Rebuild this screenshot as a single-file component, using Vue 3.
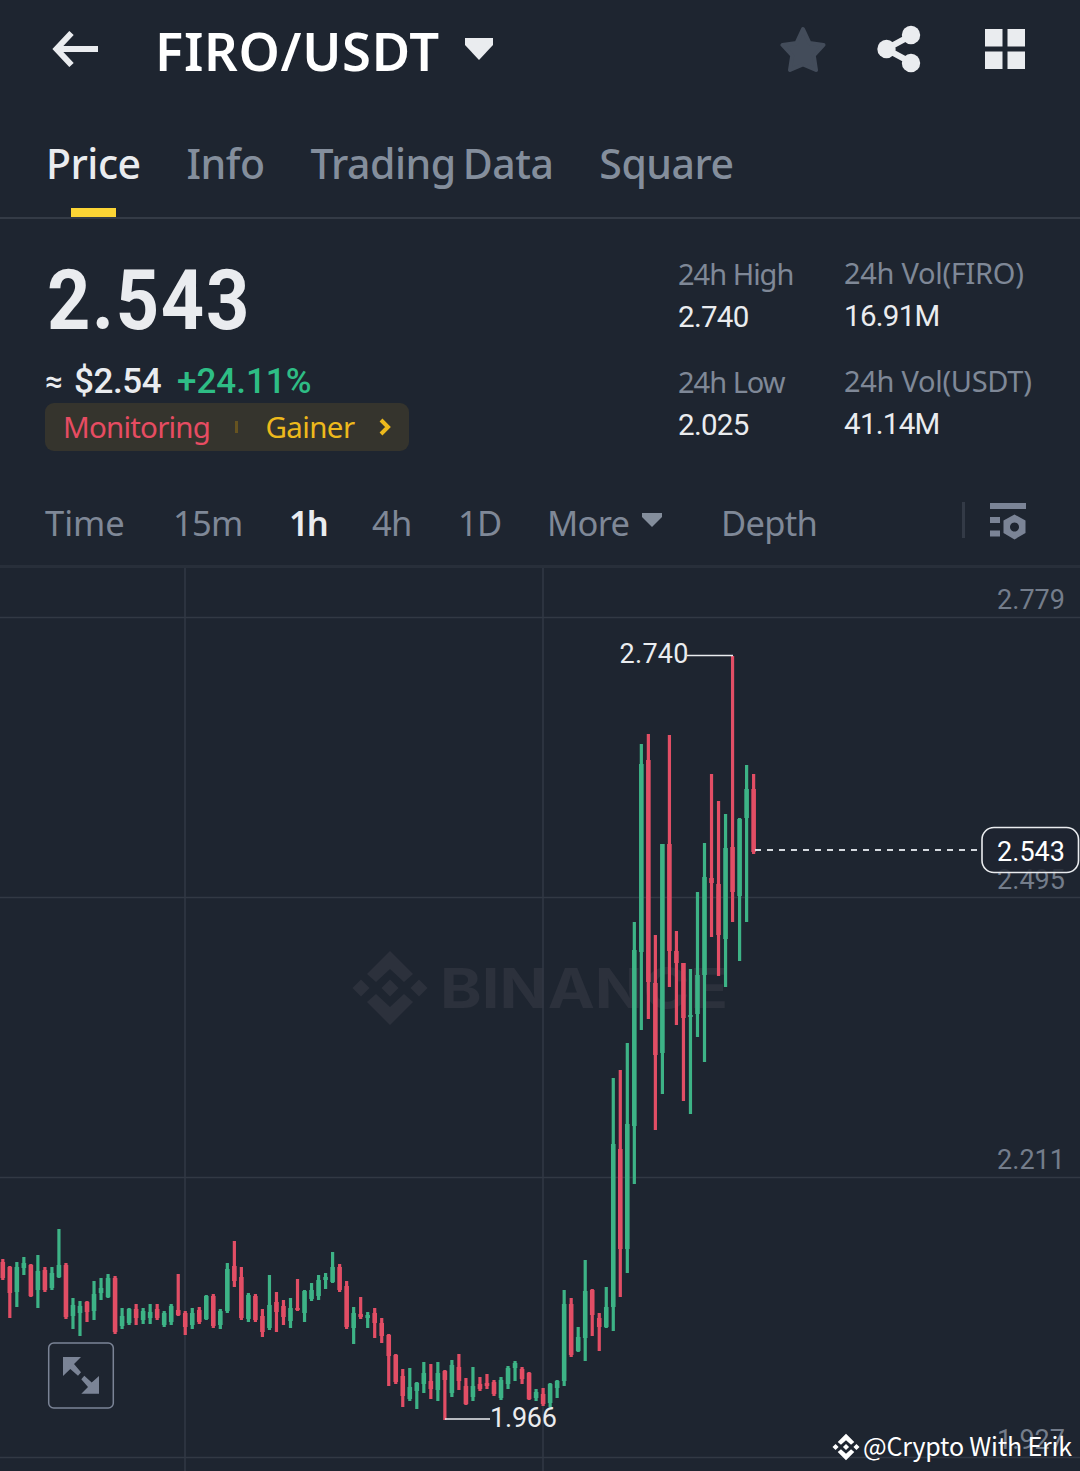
<!--
  行情页 — 交易对头部 + 24h 数据 + K 线图
-->
<template>
  <div class="page">
    <header class="header">
      <svg class="back" width="46" height="36" viewBox="0 0 46 36">
        <path d="M19.5 2 4.500 18l15 16M4 18h42" />
      </svg>
      <h1 class="pair">FIRO/USDT</h1>
      <svg class="caret" width="28" height="23" viewBox="0 0 28 23">
        <path d="M0 0h28v7L14 22 0 7z" />
      </svg>
      <div class="actions">
        <svg class="star" width="46" height="48" viewBox="0 0 46 48">
          <path d="M23 4 29.5 18 43.5 20 33.8 30.500 36 45 23 39.500 10 45 12.2 30.500 2.5 20 16.500 18z" />
        </svg>
        <svg class="share" width="44" height="48" viewBox="0 0 44 48">
          <path d="M35 10 9 24l26 14" />
          <circle cx="34" cy="10" r="9.200" />
          <circle cx="9.500" cy="24" r="9.200" />
          <circle cx="34" cy="38" r="9.200" />
        </svg>
        <svg class="grid-icon" width="40" height="40" viewBox="0 0 40 40">
          <path d="M0 0h17.500v17.500H0zM22.500 0H40v17.500H22.500zM0 22.500h17.500V40H0zM22.500 22.500H40V40H22.500z" />
        </svg>
      </div>
    </header>

    <nav class="tabs">
      <a v-for="(tab, i) in tabs" :key="tab" class="tab" :class="{ active: i === 0 }">{{ tab }}</a>
    </nav>

    <section class="ticker">
      <div class="quote">
        <div class="last">2.543</div>
        <div class="fiat">
          <span class="approx">≈</span>
          <span class="usd">$2.54</span>
          <span class="change">+24.11%</span>
        </div>
        <div class="tags">
          <span class="monitoring">Monitoring</span>
          <i class="tag-sep" />
          <span class="gainer">Gainer</span>
          <svg width="12" height="18" viewBox="0 0 12 18">
            <path d="M2 2l7 7-7 7" />
          </svg>
        </div>
      </div>
      <div class="stats">
        <div v-for="(col, i) in stats" :key="i" class="stat-col">
          <div v-for="item in col" :key="item.label" class="stat">
            <div class="stat-label">{{ item.label }}</div>
            <div class="stat-value">{{ item.value }}</div>
          </div>
        </div>
      </div>
    </section>

    <div class="intervals">
      <span v-for="item in intervals" :key="item" :class="['interval', 'iv-' + item.toLowerCase(), { active: item === '1h' }]">{{ item }}</span>
      <svg class="more-caret" width="20" height="14" viewBox="0 0 20 14">
        <path d="M0 0h20v4L10 14 0 4z" />
      </svg>
      <span class="interval depth">Depth</span>
      <i class="bar-sep" />
      <svg class="settings" width="36" height="38" viewBox="0 0 36 38">
        <path d="M0 1h36v6H0zM0 15h10v6H0zM0 28.500h10v6H0z" />
        <path fill-rule="evenodd" d="M24.500 12.500 35.500 18.500v12.500l-11 6.500-11-6.500V18.500zM24.500 20.500a4.500 4.500 0 1 0 .01 0z" />
      </svg>
    </div>

    <!-- K 线图，viewBox 与页面坐标一致 -->
    <svg class="chart" width="1080" height="903" viewBox="0 568 1080 903">
      <g class="watermark">
        <g transform="translate(390 988)">
          <path :d="logoPath" />
        </g>
        <text x="440" y="1008" textLength="288" lengthAdjust="spacingAndGlyphs">BINANCE</text>
      </g>

      <g class="grid">
        <line v-for="y in gridY" :key="'h' + y" x1="0" x2="1080" :y1="y" :y2="y" />
        <line v-for="x in gridX" :key="'v' + x" :x1="x" :x2="x" y1="568" y2="1471" />
      </g>

      <g class="axis">
        <text v-for="t in axis" :key="t.label" x="997" :y="t.y" textLength="68">{{ t.label }}</text>
      </g>

      <g v-for="(c, i) in candles" :key="i" :class="c.up ? 'up' : 'down'">
        <rect :x="c.x - 1.6" :y="c.high" width="3.200" :height="c.low - c.high" />
        <rect :x="c.x - 2.3" :y="c.top" width="4.600" :height="c.bottom - c.top" />
      </g>

      <g class="marker">
        <path d="M687 655.500h46M445 1419h45" />
        <text x="619.500" y="663" textLength="69">2.740</text>
        <text x="490" y="1427" textLength="67">1.966</text>
      </g>

      <path class="last-line" d="M755 850h226" />
      <rect class="last-box" x="982" y="827.500" width="96.500" height="45" rx="12" />
      <text class="last-text" x="997" y="861" textLength="68">2.543</text>

      <g class="expand">
        <rect x="48.700" y="1343" width="64.600" height="65" rx="5" />
        <path d="M63 1357h18l-7 7 7 8.300-3 3.400-7.700-6.700-7.300 7zM99 1376v17.700H81.300l6.700-6.700-6.700-7.700 3-3.600 7.400 6.700z" />
      </g>

      <g class="credit">
        <g transform="translate(846 1447) scale(.36)">
          <path :d="logoPath" />
        </g>
        <text x="863" y="1456" textLength="209">@Crypto With Erik</text>
      </g>
    </svg>
  </div>
</template>

<script setup>
const tabs = ['Price', 'Info', 'Trading Data', 'Square']
const intervals = ['Time', '15m', '1h', '4h', '1D', 'More']

const stats = [
  [
    { label: '24h High', value: '2.740' },
    { label: '24h Low', value: '2.025' },
  ],
  [
    { label: '24h Vol(FIRO)', value: '16.91M' },
    { label: '24h Vol(USDT)', value: '41.14M' },
  ],
]

// ==================== 图表 ====================

const gridX = [185, 543]
const gridY = [617.5, 897.5, 1177.5, 1457.5]

const axis = [
  { label: '2.779', y: 609 },
  { label: '2.495', y: 889 },
  { label: '2.211', y: 1169 },
  { label: '1.927', y: 1449 },
]

// 以中心点为原点的菱形标志
const logoPath =
  'M0-37 23-14 14-6 0-19-14-6-23-14zM0 37 23 14 14 6 0 19-14 6-23 14zM0-8.500 8.500 0 0 8.500-8.500 0zM-29-8.500-20.500 0-29 8.500-37.500 0zM29-8.500 37.500 0 29 8.500 20.500 0z'

// 方向, 最高, 最低, 实体上沿, 实体下沿
const raw = [
  ['d', 1259, 1280, 1262, 1278], ['d', 1266, 1318, 1267, 1293], ['u', 1262, 1307, 1267, 1292],
  ['u', 1257, 1275, 1263, 1268], ['d', 1264, 1297, 1265, 1296], ['u', 1255, 1308, 1271, 1290],
  ['d', 1267, 1292, 1270, 1290], ['u', 1267, 1290, 1273, 1288], ['u', 1229, 1278, 1265, 1277],
  ['d', 1263, 1319, 1265, 1317], ['u', 1298, 1329, 1305, 1316], ['u', 1301, 1336, 1306, 1313],
  ['d', 1301, 1322, 1302, 1312], ['u', 1281, 1320, 1294, 1311], ['u', 1278, 1300, 1288, 1293],
  ['u', 1274, 1298, 1278, 1297], ['d', 1276, 1334, 1278, 1332], ['u', 1308, 1329, 1316, 1326],
  ['u', 1308, 1325, 1309, 1323], ['d', 1304, 1325, 1309, 1318], ['u', 1308, 1324, 1311, 1320],
  ['u', 1304, 1324, 1312, 1318], ['d', 1304, 1320, 1309, 1318], ['u', 1311, 1327, 1313, 1325],
  ['u', 1304, 1325, 1306, 1322], ['d', 1274, 1316, 1310, 1315], ['d', 1311, 1335, 1313, 1327],
  ['u', 1308, 1329, 1313, 1325], ['d', 1307, 1324, 1310, 1322], ['u', 1295, 1320, 1296, 1319],
  ['d', 1294, 1328, 1296, 1326], ['u', 1309, 1329, 1311, 1325], ['u', 1263, 1313, 1269, 1311],
  ['d', 1241, 1287, 1266, 1281], ['d', 1267, 1320, 1277, 1318], ['u', 1293, 1322, 1295, 1319],
  ['d', 1294, 1322, 1296, 1320], ['d', 1309, 1337, 1316, 1332], ['u', 1275, 1330, 1305, 1328],
  ['d', 1292, 1332, 1302, 1312], ['d', 1300, 1325, 1306, 1317], ['u', 1298, 1328, 1308, 1321],
  ['d', 1279, 1311, 1308, 1310], ['u', 1290, 1322, 1291, 1313], ['u', 1283, 1301, 1290, 1299],
  ['u', 1275, 1300, 1280, 1296], ['u', 1273, 1289, 1277, 1280], ['u', 1252, 1283, 1267, 1282],
  ['d', 1264, 1292, 1267, 1290], ['d', 1281, 1329, 1286, 1327], ['u', 1307, 1344, 1313, 1328],
  ['d', 1297, 1319, 1314, 1317], ['u', 1312, 1328, 1315, 1318], ['d', 1308, 1338, 1313, 1323],
  ['d', 1318, 1343, 1323, 1336], ['d', 1334, 1386, 1335, 1356], ['d', 1354, 1384, 1355, 1382],
  ['d', 1369, 1407, 1376, 1396], ['u', 1368, 1401, 1387, 1399], ['u', 1382, 1409, 1383, 1391],
  ['u', 1362, 1393, 1373, 1384], ['d', 1364, 1399, 1381, 1389], ['u', 1362, 1401, 1373, 1390],
  ['d', 1370, 1420, 1371, 1380], ['u', 1360, 1397, 1365, 1393], ['d', 1354, 1390, 1367, 1381],
  ['d', 1378, 1405, 1386, 1404], ['u', 1367, 1401, 1386, 1397], ['d', 1377, 1391, 1384, 1389],
  ['d', 1374, 1389, 1383, 1386], ['d', 1380, 1396, 1382, 1394], ['u', 1377, 1400, 1380, 1398],
  ['u', 1366, 1389, 1368, 1384], ['u', 1361, 1381, 1363, 1368], ['d', 1367, 1384, 1369, 1379],
  ['d', 1372, 1400, 1373, 1399], ['u', 1389, 1401, 1392, 1398], ['d', 1388, 1406, 1394, 1404],
  ['u', 1383, 1407, 1384, 1403], ['u', 1380, 1398, 1381, 1388], ['u', 1290, 1386, 1304, 1381],
  ['d', 1298, 1357, 1304, 1355], ['u', 1327, 1352, 1337, 1351], ['u', 1260, 1361, 1291, 1338],
  ['d', 1289, 1336, 1290, 1315], ['d', 1313, 1351, 1318, 1327], ['u', 1287, 1328, 1307, 1327],
  ['u', 1078, 1331, 1144, 1307], ['d', 1070, 1297, 1149, 1249], ['u', 1043, 1273, 1124, 1249],
  ['u', 922, 1184, 950, 1126], ['u', 744, 1030, 764, 952], ['d', 734, 1019, 760, 982],
  ['d', 935, 1130, 983, 1055], ['u', 844, 1094, 844, 1053], ['d', 735, 987, 844, 951],
  ['d', 931, 1025, 951, 963], ['d', 963, 1101, 963, 1018], ['u', 969, 1114, 1015, 1017],
  ['u', 892, 1037, 975, 1014], ['u', 843, 1062, 877, 975], ['d', 774, 937, 878, 883],
  ['d', 801, 976, 884, 935], ['u', 814, 987, 848, 939], ['d', 656, 922, 847, 892],
  ['u', 818, 961, 819, 896], ['u', 765, 922, 789, 818], ['d', 774, 854, 789, 852],
]

const candles = raw.map(([dir, high, low, top, bottom], i) => ({
  x: 2.8 + i * 7.017,
  up: dir === 'u',
  high,
  low,
  top,
  bottom,
}))
</script>

<style>
body {
  background: #1e2530;
}
</style>

<style scoped>
.page {
  width: 1080px;
  height: 1471px;
  overflow: hidden;
  background: #1e2530;
  color: #eaecef;
  font-family: 'Noto Sans', sans-serif;
  white-space: nowrap;
}

svg {
  display: block;
  flex: none;
}

/* 头部 */
.header {
  display: flex;
  align-items: center;
  height: 98px;
  padding: 0 55px 0 52px;
  box-sizing: border-box;
}

.back {
  fill: none;
  stroke: #eaecef;
  stroke-width: 6;
}

.pair {
  width: 286px;
  margin: 3px 0 0 57px;
  color: #fff;
  font-size: 52.5px;
  font-weight: 600;
  line-height: 60px;
  letter-spacing: 0.7px;
}

.caret {
  margin-left: 24px;
  fill: #eaecef;
}

.actions {
  display: flex;
  align-items: center;
  margin-left: auto;
}

.star {
  margin-right: 51px;
  fill: #434c5a;
  stroke: #434c5a;
  stroke-width: 4;
  stroke-linejoin: round;
}

.share {
  margin-right: 64px;
  fill: #eaecef;
}

.share path {
  fill: none;
  stroke: #eaecef;
  stroke-width: 6;
}

.grid-icon {
  fill: #eaecef;
}

/* 标签栏 */
.tabs {
  display: flex;
  gap: 46px;
  height: 119px;
  padding: 0 46px;
  border-bottom: 2px solid #343b46;
}

.tab {
  display: flex;
  flex-direction: column;
  align-items: center;
  justify-content: space-between;
  padding-top: 35px;
  color: #848e9c;
  font-size: 41px;
  font-weight: 500;
  line-height: 60px;
  letter-spacing: -0.5px;
  word-spacing: -3px;
}

.tab.active {
  color: #eaecef;
}

.tab.active::after {
  content: '';
  width: 45px;
  height: 9px;
  background: #fcd535;
}

/* 价格区 */
.ticker {
  display: flex;
  height: 261px;
  padding: 0 45px;
}

.quote {
  width: 633px;
  padding-top: 42px;
}

.last {
  margin-left: 2px;
  font-family: Roboto, sans-serif;
  font-size: 84px;
  font-weight: 700;
  line-height: 80px;
  letter-spacing: 1.9px;
  transform: scaleX(0.9);
  transform-origin: left;
}

.fiat {
  display: flex;
  height: 43px;
  margin-top: 19px;
  font-family: Roboto, sans-serif;
  font-size: 35px;
  font-weight: 500;
  line-height: 44px;
}

.approx {
  width: 29px;
  font-size: 31px;
}

.usd {
  width: 103px;
  letter-spacing: -0.4px;
}

.change {
  color: #2ebd85;
}

.tags {
  display: flex;
  align-items: center;
  width: 364px;
  height: 48px;
  padding: 0 18px;
  box-sizing: border-box;
  border-radius: 9px;
  background: #35342d;
  font-size: 29.5px;
  line-height: 48px;
  letter-spacing: -0.6px;
}

.monitoring {
  width: 148px;
  color: #e74c62;
  letter-spacing: -0.8px;
}

.tag-sep {
  width: 3px;
  height: 12px;
  margin: 0 27px 0 25px;
  background: #665320;
}

.gainer {
  width: 90px;
  color: #edb91c;
}

.tags svg {
  margin-left: 24px;
  fill: none;
  stroke: #edb91c;
  stroke-width: 4;
}

.stats {
  display: flex;
  padding-top: 33px;
}

.stat-col {
  width: 166px;
}

.stat-col + .stat-col {
  margin-top: -1px;
}

.stat {
  height: 108px;
}

.stat-label {
  color: #7f8897;
  font-size: 29px;
  line-height: 44px;
  letter-spacing: -1px;
}

.stat-col + .stat-col .stat-label {
  letter-spacing: -0.3px;
}

.stat-value {
  font-family: Roboto, sans-serif;
  font-size: 29.5px;
  line-height: 42px;
  letter-spacing: -0.7px;
}

/* 周期栏 */
.intervals {
  display: flex;
  align-items: center;
  height: 85px;
  padding: 0 54px 0 45px;
  border-bottom: 3px solid #282f3a;
}

.interval {
  color: #7f8897;
  font-size: 34.5px;
  line-height: 48px;
  letter-spacing: -0.7px;
}

.interval.active {
  color: #eaecef;
  font-weight: 600;
  letter-spacing: -2px;
}

.iv-time {
  width: 128px;
  letter-spacing: 0;
}

.iv-15m {
  width: 116px;
}

.iv-1h {
  width: 83px;
}

.iv-4h {
  width: 86px;
}

.iv-1d {
  width: 89px;
}

.iv-more {
  width: 95px;
}

.more-caret {
  margin-top: -5px;
  fill: #848e9c;
}

.depth {
  margin-left: 59px;
}

.bar-sep {
  width: 3px;
  height: 36px;
  margin: -5px 25px 0 auto;
  background: #333a46;
}

.settings {
  margin-top: -4px;
  fill: #7b8496;
}

/* 图表 */
.chart text {
  font-family: Roboto, sans-serif;
  font-size: 27px;
}

.grid line {
  stroke: #323944;
  stroke-width: 1.5;
}

.watermark {
  fill: #2c313c;
}

.chart .watermark text {
  font-family: Inter, sans-serif;
  font-size: 55.5px;
  font-weight: 700;
}

.axis {
  fill: #747d8b;
}

.up {
  fill: #3db386;
}

.down {
  fill: #e24e65;
}

.marker {
  fill: #eaecef;
}

.marker path {
  stroke: #eaecef;
  stroke-width: 1.6;
}

.last-line {
  stroke: #d5d9df;
  stroke-width: 1.8;
  stroke-dasharray: 6 6;
}

.last-box {
  fill: #1e2530;
  fill-opacity: 0.85;
  stroke: #eaecef;
  stroke-width: 1.6;
}

.last-text {
  fill: #fff;
}

.expand {
  fill: #7b8496;
}

.expand rect {
  fill: none;
  stroke: #7b8496;
  stroke-width: 1.5;
}

.credit {
  fill: #fff;
}

.chart .credit text {
  font-family: 'Noto Sans CJK SC', sans-serif;
  font-size: 25px;
}
</style>
